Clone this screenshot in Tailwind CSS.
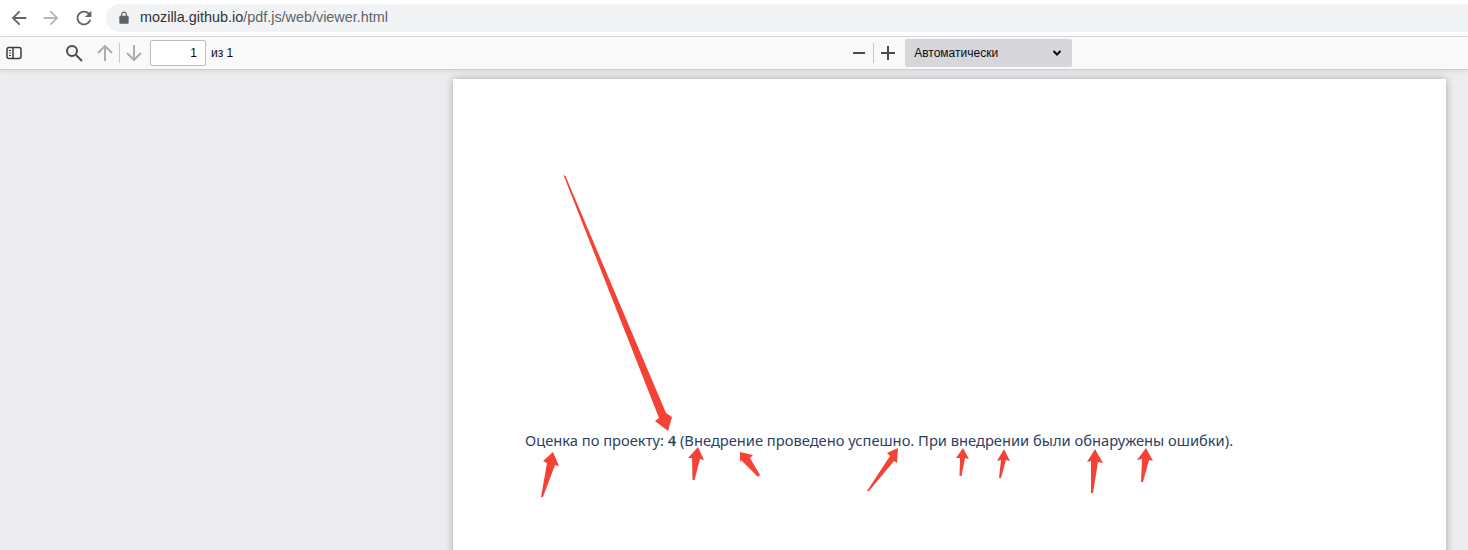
<!DOCTYPE html>
<html lang="ru">
<head>
  <meta charset="UTF-8" />
  <title>PDF.js viewer</title>
  <script src="https://cdn.jsdelivr.net/npm/@tailwindcss/browser@4"></script>
</head>
<body class="relative h-[550px] w-[1468px] overflow-hidden bg-[#ededf0] font-['Liberation_Sans',sans-serif]">

  <!-- chrome address bar -->
  <div class="flex h-[37px] items-center border-b border-[#dcdcdc] bg-white">
    <svg class="ml-[8px] h-[22px] w-[22px]" viewBox="0 0 24 24" fill="#5f6368"><path d="M20 11H7.83l5.59-5.59L12 4l-8 8 8 8 1.41-1.41L7.83 13H20v-2z"/></svg>
    <svg class="ml-[10px] h-[22px] w-[22px]" viewBox="0 0 24 24" fill="#b4b6b9"><path d="M4 11h12.17l-5.59-5.59L12 4l8 8-8 8-1.41-1.41L16.17 13H4v-2z"/></svg>
    <svg class="ml-[11px] h-[22px] w-[22px]" viewBox="0 0 24 24" fill="#5f6368"><path d="M17.65 6.35C16.2 4.9 14.21 4 12 4c-4.42 0-7.99 3.58-7.99 8s3.57 8 7.99 8c3.73 0 6.84-2.55 7.73-6h-2.08c-.82 2.33-3.04 4-5.65 4-3.31 0-6-2.69-6-6s2.69-6 6-6c1.66 0 3.14.69 4.22 1.78L13 11h7V4l-2.35 2.35z"/></svg>
    <div class="ml-[11px] flex h-[28px] flex-1 items-center rounded-l-full bg-[#f1f3f4] pl-[11px]">
      <svg class="h-[14px] w-[14px]" viewBox="0 0 24 24" fill="#5f6368"><path d="M18 8h-1V6c0-2.76-2.24-5-5-5S7 3.24 7 6v2H6c-1.1 0-2 .9-2 2v10c0 1.1.9 2 2 2h12c1.1 0 2-.9 2-2V10c0-1.100-.9-2-2-2zM9 8V6c0-1.660 1.340-3 3-3s3 1.340 3 3v2H9z"/></svg>
      <span class="ml-[9px] text-[14.4px] text-[#303134]">mozilla.github.io<span class="text-[#5f6368]">/pdf.js/web/viewer.html</span></span>
    </div>
  </div>

  <!-- pdf.js toolbar -->
  <div class="relative flex h-[33px] items-center border-b border-[#cfcfcf] bg-[#f9f9fa] text-[12px] text-[#0c0c0d] shadow-[0_1px_4px_rgba(0,0,0,0.1)]">
    <svg class="ml-[6px] h-[16px] w-[16px]" viewBox="0 0 16 16" fill="none" stroke="#3c3c3e" stroke-width="1.500"><rect x="1" y="2.500" width="14" height="11" rx="2"/><path d="M7 2.500v11"/><path d="M3 5.500h2M3 8h2M3 10.500h2" stroke-width="1"/></svg>
    <svg class="ml-[43px] h-[18px] w-[18px]" viewBox="0 0 18 18" fill="none" stroke="#4a4a4f" stroke-width="2"><circle cx="7" cy="7" r="5"/><path d="M11 11l6 6"/></svg>
    <svg class="ml-[13px] h-[18px] w-[18px]" viewBox="0 0 18 18" fill="none" stroke="#adadb0" stroke-width="2"><path d="M9 17V2M2 9l7-7 7 7"/></svg>
    <div class="ml-[5px] h-[20px] w-px bg-[#c8c8ca]"></div>
    <svg class="ml-[5px] h-[18px] w-[18px]" viewBox="0 0 18 18" fill="none" stroke="#adadb0" stroke-width="2"><path d="M9 1v15M2 9l7 7 7-7"/></svg>
    <div class="ml-[7px] flex h-[26px] w-[56px] items-center justify-end rounded-[2px] border border-[#bdbdbf] bg-white pr-[8px] text-[12px]">1</div>
    <span class="ml-[5px]">из 1</span>
    <svg class="ml-[619px] h-[14px] w-[14px]" viewBox="0 0 14 14" stroke="#4a4a4f" stroke-width="2"><path d="M1 7h12"/></svg>
    <div class="ml-[7px] h-[20px] w-px bg-[#c8c8ca]"></div>
    <svg class="ml-[6px] h-[16px] w-[16px]" viewBox="0 0 16 16" stroke="#4a4a4f" stroke-width="2"><path d="M1 8h14M8 1v14"/></svg>
    <div class="ml-[9px] flex h-[28px] w-[167px] items-center justify-between rounded-[2px] bg-[#d7d7db] pl-[9px] pr-[10px]">
      <span>Автоматически</span>
      <svg class="h-[8px] w-[10px]" viewBox="0 0 10 8" fill="none" stroke="#0c0c0d" stroke-width="2"><path d="M1.500 2l3.500 3.500L8.500 2"/></svg>
    </div>
  </div>

  <!-- viewer -->
  <div class="pl-[453px] pt-[9px]">
    <div class="h-[480px] w-[993px] bg-white pl-[72px] pt-[351px] shadow-[0_0_8px_rgba(0,0,0,0.3)]">
      <p class="font-['Noto_Sans',sans-serif] text-[14.69px] leading-[20px] whitespace-nowrap text-[#2c3f63]">Оценка по проекту: <b class="font-semibold">4</b> (Внедрение проведено успешно. При внедрении были обнаружены ошибки).</p>
    </div>
  </div>

  <!-- red annotation arrows drawn over the page -->
  <svg class="absolute inset-0 h-[550px] w-[1468px]" viewBox="0 0 1468 550" fill="#f44336">
    <polygon points="563.500,175 565.500,176 666,413 672,417 668,431 655,421 659,418"/>
    <polygon points="541,497 543,497 555,465 559,466 553,452 543,461 547,463"/>
    <polygon points="692.500,480 694.500,480 700,459 704,460 698,447 688,458 692,458"/>
    <polygon points="760,475 758,477 741,460 740,463 740,452 753,455 750,458"/>
    <polygon points="867,491 869,491 894,461 897,463 898,448 887,453 890,456"/>
    <polygon points="959.500,476 961.500,476 965,458 969,459 963,448 956,458 960,458"/>
    <polygon points="999,478 1001,478 1006,460 1010,461 1004,449 997,461 1001,460"/>
    <polygon points="1091,493 1093,493 1098,462 1103,463 1095,449 1087,462 1091,461"/>
    <polygon points="1141,482 1143,482 1149,460 1153,461 1146,448 1137,460 1142,459"/>
  </svg>
</body>
</html>
